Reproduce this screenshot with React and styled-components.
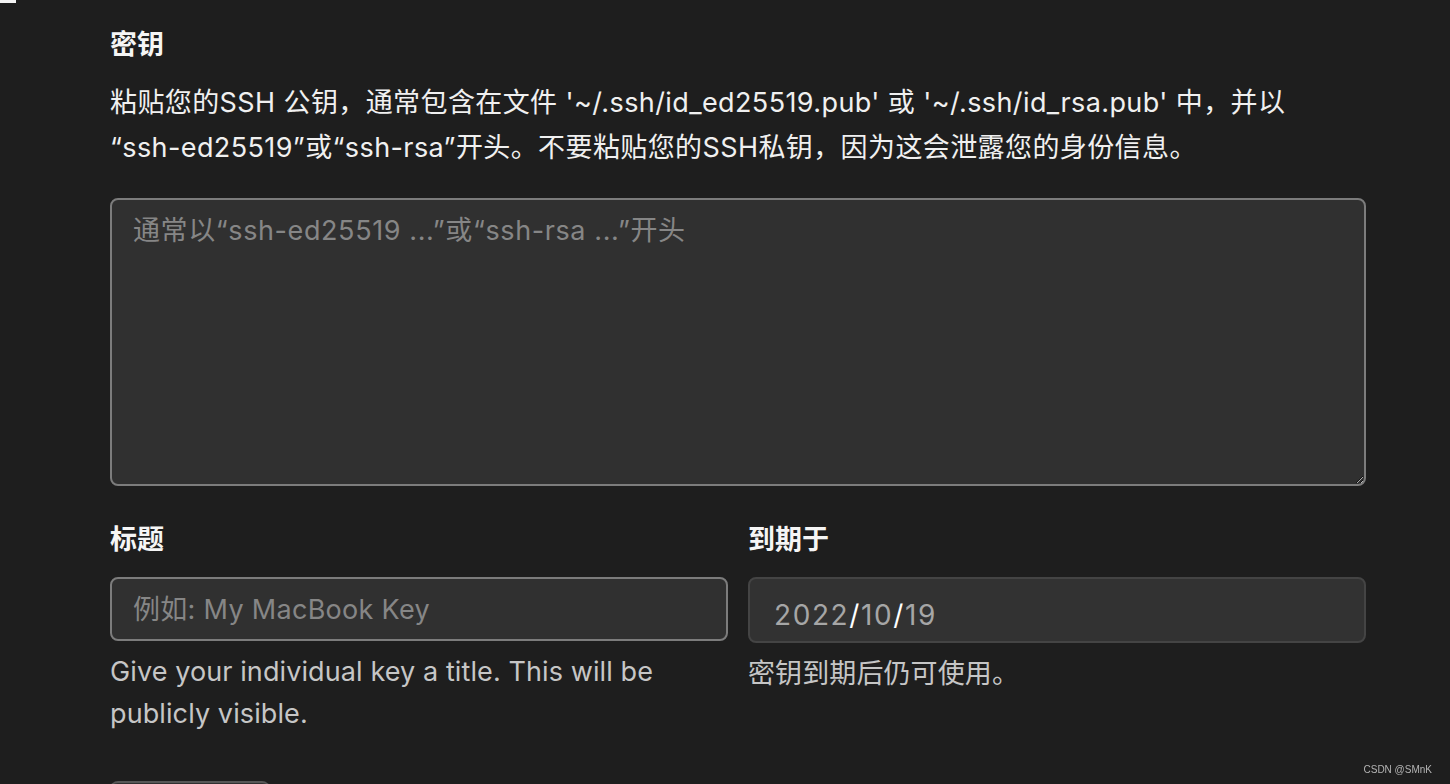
import React from "react";
import styled, { createGlobalStyle } from "styled-components";

const GlobalStyle = createGlobalStyle`
  html, body {
    margin: 0;
    padding: 0;
    background: #1e1e1e;
    overflow: hidden;
  }
  body {
    font-family: Inter, "Noto Sans CJK SC", sans-serif;
    color: #f2f2f2;
  }
`;

const CornerMark = styled.div`
  width: 16px;
  height: 3px;
  background: #f4f4f4;
`;

const Page = styled.main`
  width: 1256px;
  padding: 24px 0 0 110px;
  display: flex;
  flex-direction: column;
`;

const Heading = styled.h3`
  margin: 0;
  font-size: 27px;
  line-height: 36px;
  font-weight: bold;
  color: #f5f5f5;
`;

const Description = styled.p`
  margin: 17px 0 0;
  font-size: 27px;
  line-height: 45px;
  letter-spacing: 0.4px;
  color: #f0f0f0;
`;

const KeyArea = styled.textarea`
  box-sizing: border-box;
  margin-top: 28px;
  width: 100%;
  height: 288px;
  padding: 13px 21px;
  background: #303030;
  border: 2px solid #7c7c7c;
  border-radius: 8px;
  color: #f0f0f0;
  font-family: inherit;
  font-size: 27px;
  line-height: 36px;
  letter-spacing: 0.6px;
  resize: vertical;
  color-scheme: dark;
  outline: none;

  &::placeholder {
    color: #868686;
  }
`;

const Row = styled.div`
  margin-top: 36px;
  display: grid;
  grid-template-columns: 1fr 1fr;
  column-gap: 20px;
`;

const Field = styled.div`
  display: flex;
  flex-direction: column;
`;

const Label = styled.label`
  font-size: 27px;
  line-height: 36px;
  font-weight: bold;
  color: #f5f5f5;
`;

const TextInput = styled.input`
  box-sizing: border-box;
  margin-top: 19px;
  width: 100%;
  height: 64px;
  padding: 0 21px;
  background: #303030;
  border: 2px solid #7c7c7c;
  border-radius: 8px;
  color: #f0f0f0;
  font-family: inherit;
  font-size: 27px;
  letter-spacing: 0.3px;
  outline: none;

  &::placeholder {
    color: #868686;
  }
`;

const DateBox = styled.div`
  box-sizing: border-box;
  margin-top: 19px;
  height: 66px;
  padding: 10px 24px 0;
  display: flex;
  align-items: center;
  background: #323232;
  border: 2px solid #444444;
  border-radius: 8px;
  font-size: 28px;
  letter-spacing: 1.6px;
  color: #a6a6a6;
`;

const Slash = styled.span`
  color: #ffffff;
`;

const Hint = styled.p`
  margin: 10px 0 0;
  font-size: 27px;
  line-height: 42px;
  letter-spacing: 0.1px;
  color: #c6c6c6;
`;

const SubmitButton = styled.button`
  margin-top: 46px;
  width: 160px;
  height: 44px;
  background: #303030;
  border: none;
  border-top: 2px solid #575757;
  border-radius: 8px 8px 0 0;
`;

const Watermark = styled.span`
  position: fixed;
  right: 18px;
  bottom: 9px;
  font-size: 10px;
  color: #b4b4b4;
  font-family: "Liberation Sans", sans-serif;
`;

export default function App() {
  return (
    <>
      <GlobalStyle />
      <CornerMark />
      <Page>
        <Heading>密钥</Heading>
        <Description>
          粘贴您的SSH 公钥，通常包含在文件 '~/.ssh/id_ed25519.pub' 或 '~/.ssh/id_rsa.pub' 中，并以
          <br />
          “ssh-ed25519”或“ssh-rsa”开头。不要粘贴您的SSH私钥，因为这会泄露您的身份信息。
        </Description>
        <KeyArea placeholder="通常以“ssh-ed25519 ...”或“ssh-rsa ...”开头" />
        <Row>
          <Field>
            <Label>标题</Label>
            <TextInput placeholder="例如: My MacBook Key" />
            <Hint>
              Give your individual key a title. This will be
              <br />
              publicly visible.
            </Hint>
          </Field>
          <Field>
            <Label>到期于</Label>
            <DateBox>
              2022<Slash>/</Slash>10<Slash>/</Slash>19
            </DateBox>
            <Hint>密钥到期后仍可使用。</Hint>
          </Field>
        </Row>
        <SubmitButton />
      </Page>
      <Watermark>CSDN @SMnK</Watermark>
    </>
  );
}
